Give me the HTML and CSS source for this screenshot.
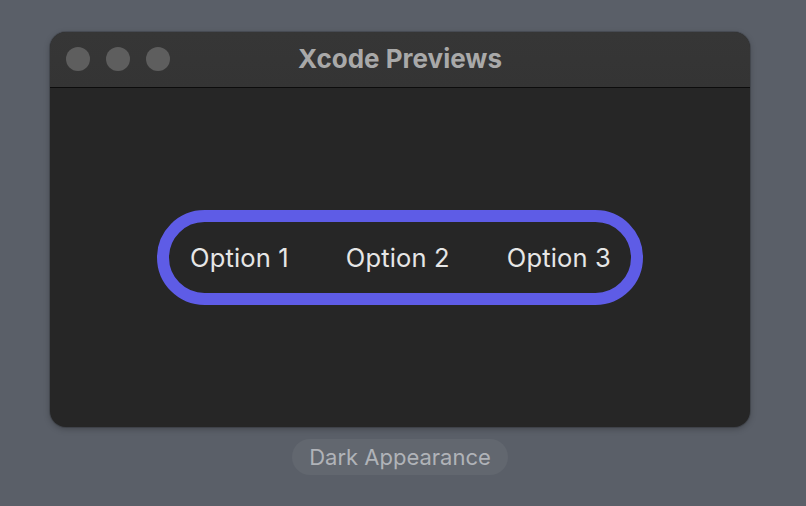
FILE: index.html
```html
<!DOCTYPE html>
<html>
<head>
<meta charset="utf-8">
<link rel="stylesheet" href="styles.css">
</head>
<body>
<div class="stage">
  <div class="window">
    <div class="titlebar">
      <div class="lights">
        <span class="light"></span>
        <span class="light"></span>
        <span class="light"></span>
      </div>
      <div class="title">Xcode Previews</div>
    </div>
    <div class="content">
      <div class="capsule">
        <span class="option">Option 1</span>
        <span class="option">Option 2</span>
        <span class="option">Option 3</span>
      </div>
    </div>
  </div>
  <div class="label">Dark Appearance</div>
</div>
</body>
</html>
```
FILE: styles.css
```css
html, body {
  margin: 0;
  padding: 0;
  background: #5a5f68;
  width: 806px;
  height: 506px;
  overflow: hidden;
  font-family: Inter, "Noto Sans", "Liberation Sans", sans-serif;
}
.stage {
  display: flex;
  flex-direction: column;
  align-items: center;
  padding-top: 32px;
  padding-right: 6px;
}
.window {
  width: 700px;
  height: 395px;
  border-radius: 16px;
  overflow: hidden;
  background: #262626;
  box-shadow: 0 2px 6px rgba(0,0,0,0.25), 0 0 0 1px rgba(0,0,0,0.15);
  display: flex;
  flex-direction: column;
}
.titlebar {
  height: 55px;
  flex: none;
  background: linear-gradient(#363636, #343434);
  border-bottom: 1px solid #0c0c0c;
  display: flex;
  align-items: center;
  justify-content: center;
  position: relative;
}
.lights {
  position: absolute;
  left: 16px;
  top: 15px;
  display: flex;
  gap: 16px;
}
.light {
  width: 24px;
  height: 24px;
  border-radius: 50%;
  background: #5e5e5e;
}
.title {
  color: #a9a9a9;
  font-size: 26px;
  font-weight: 700;
  margin-top: -2px;
}
.content {
  flex: 1;
  display: flex;
  align-items: center;
  justify-content: center;
}
.capsule {
  display: flex;
  align-items: center;
  gap: 57px;
  border: 12px solid #5e5ce6;
  border-radius: 48px;
  height: 71px;
  padding: 0 20px 0 21px;
}
.option {
  color: #e6e6e6;
  font-size: 25.5px;
  letter-spacing: 0.15px;
  line-height: 1;
  margin-top: 1px;
}
.label {
  margin-top: 12px;
  height: 36px;
  padding: 0 17px;
  border-radius: 18px;
  background: #62676f;
  color: #b0b3b8;
  font-size: 22px;
  display: flex;
  align-items: center;
}
```
